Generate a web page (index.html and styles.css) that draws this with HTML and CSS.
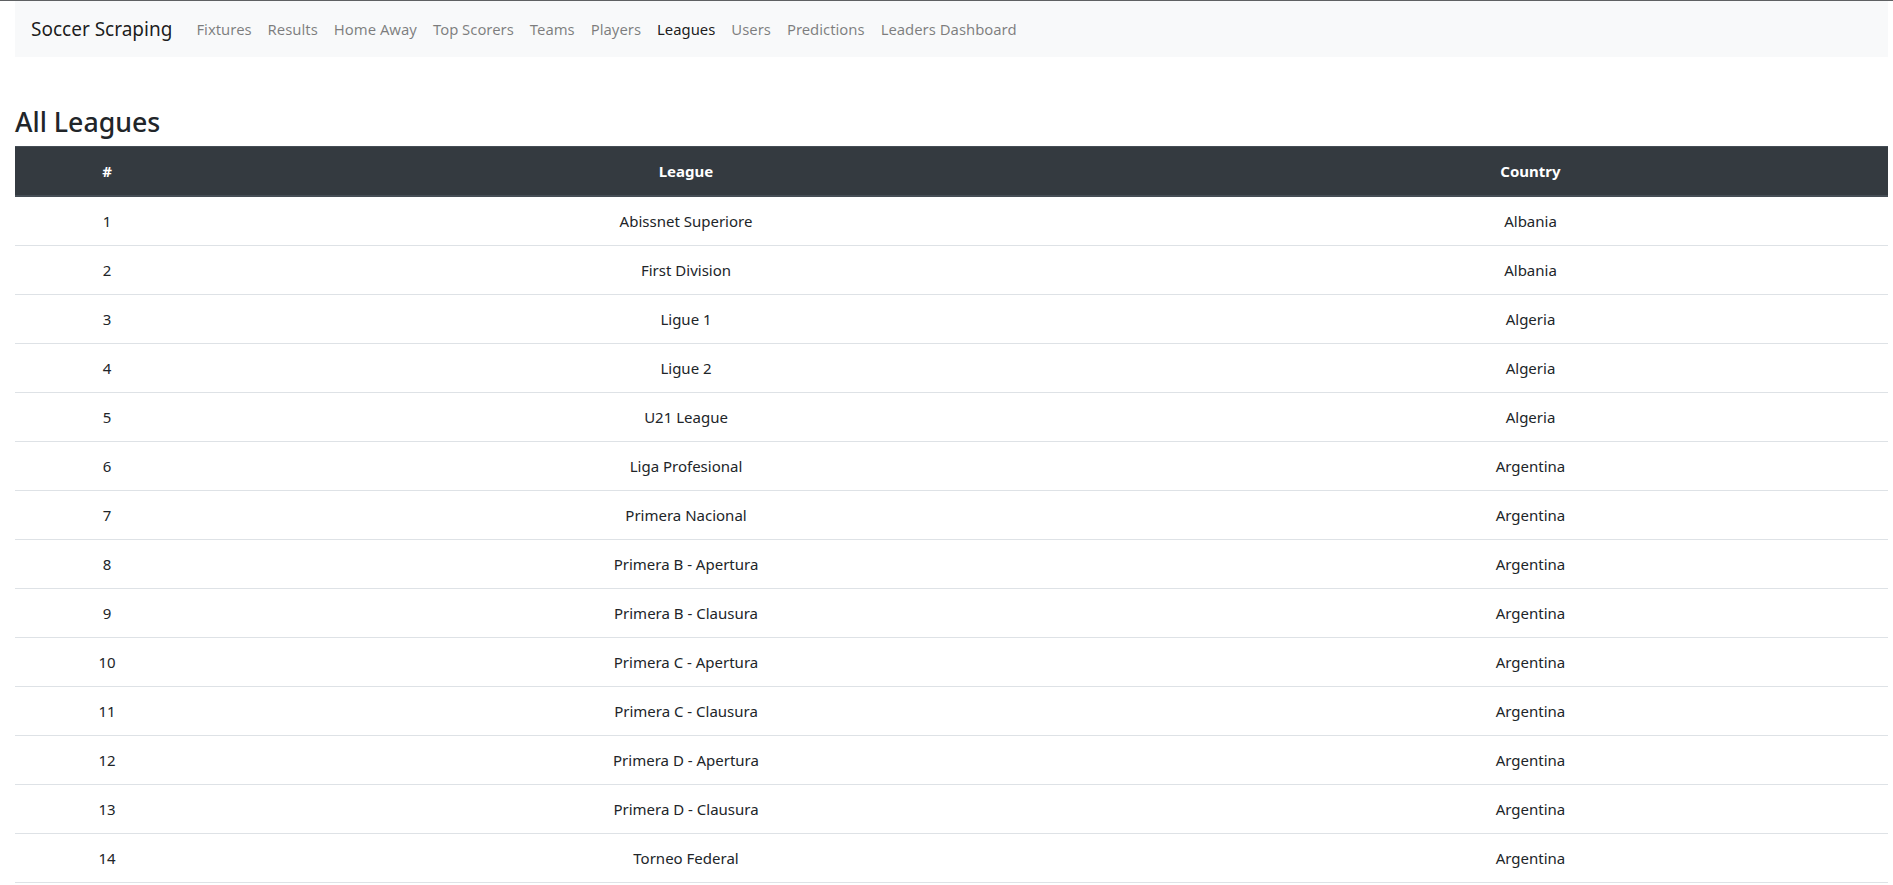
FILE: index.html
```html
<!DOCTYPE html>
<html lang="en">
<head>
<meta charset="utf-8">
<title>Soccer Scraping - Leagues</title>
<link rel="stylesheet" href="styles.css">
</head>
<body>
<div class="page">
  <nav class="navbar">
    <a class="brand" href="#">Soccer Scraping</a>
    <ul class="nav">
      <li><a class="nav-link" href="#">Fixtures</a></li>
      <li><a class="nav-link" href="#">Results</a></li>
      <li><a class="nav-link" href="#">Home Away</a></li>
      <li><a class="nav-link" href="#">Top Scorers</a></li>
      <li><a class="nav-link" href="#">Teams</a></li>
      <li><a class="nav-link" href="#">Players</a></li>
      <li><a class="nav-link active" href="#">Leagues</a></li>
      <li><a class="nav-link" href="#">Users</a></li>
      <li><a class="nav-link" href="#">Predictions</a></li>
      <li><a class="nav-link" href="#">Leaders Dashboard</a></li>
    </ul>
  </nav>
  <h3 class="title">All Leagues</h3>
  <table class="table">
    <thead>
      <tr>
        <th class="col-num">#</th>
        <th class="col-league">League</th>
        <th class="col-country">Country</th>
      </tr>
    </thead>
    <tbody>
      <tr><td>1</td><td>Abissnet Superiore</td><td>Albania</td></tr>
      <tr><td>2</td><td>First Division</td><td>Albania</td></tr>
      <tr><td>3</td><td>Ligue 1</td><td>Algeria</td></tr>
      <tr><td>4</td><td>Ligue 2</td><td>Algeria</td></tr>
      <tr><td>5</td><td>U21 League</td><td>Algeria</td></tr>
      <tr><td>6</td><td>Liga Profesional</td><td>Argentina</td></tr>
      <tr><td>7</td><td>Primera Nacional</td><td>Argentina</td></tr>
      <tr><td>8</td><td>Primera B - Apertura</td><td>Argentina</td></tr>
      <tr><td>9</td><td>Primera B - Clausura</td><td>Argentina</td></tr>
      <tr><td>10</td><td>Primera C - Apertura</td><td>Argentina</td></tr>
      <tr><td>11</td><td>Primera C - Clausura</td><td>Argentina</td></tr>
      <tr><td>12</td><td>Primera D - Apertura</td><td>Argentina</td></tr>
      <tr><td>13</td><td>Primera D - Clausura</td><td>Argentina</td></tr>
      <tr><td>14</td><td>Torneo Federal</td><td>Argentina</td></tr>
    </tbody>
  </table>
</div>
</body>
</html>
```

FILE: styles.css
```css
html, body {
  margin: 0;
  padding: 0;
}

body {
  border-top: 1px solid #5f6163;
  background: #fff;
  color: #212529;
  font-family: "Noto Sans", "Open Sans", "Liberation Sans", sans-serif;
  font-size: 15px;
  line-height: 24px;
}

.page {
  padding: 0 5px 0 15px;
}

.navbar {
  display: flex;
  align-items: center;
  background: #f8f9fa;
  padding: 8px 16px;
}

.brand {
  color: rgba(0, 0, 0, 0.9);
  text-decoration: none;
  font-size: 19px;
  line-height: 30px;
  padding: 5px 0;
  margin-right: 16px;
}

.nav {
  display: flex;
  list-style: none;
  margin: 0;
  padding: 0;
}

.nav-link {
  display: block;
  padding: 8px;
  color: rgba(0, 0, 0, 0.5);
  text-decoration: none;
  font-size: 14.85px;
  line-height: 24px;
}

.nav-link.active {
  color: rgba(0, 0, 0, 0.9);
}

.title {
  margin: 48px 0 8px;
  font-size: 26.7px;
  font-weight: 500;
  line-height: 33px;
  color: #212529;
}

.table {
  width: 100%;
  border-collapse: collapse;
  table-layout: fixed;
}

.table th,
.table td {
  padding: 12px;
  text-align: center;
  vertical-align: top;
  line-height: 24px;
}

.table th {
  background: #343a40;
  color: #fff;
  font-weight: 700;
  border-top: 1px solid #454d55;
  border-bottom: 2px solid #454d55;
}

.table td {
  border-top: 1px solid #dee2e6;
}

.table tbody tr:last-child td {
  border-bottom: 1px solid #dee2e6;
}

.col-num {
  width: 160px;
}

.col-league {
  width: 950px;
}

.col-country {
  width: auto;
}
```
